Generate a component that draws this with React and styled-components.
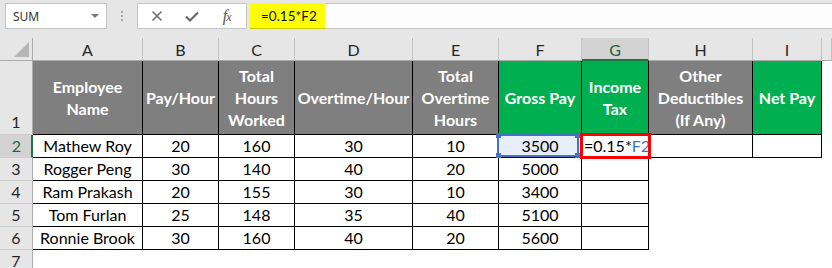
import React from 'react';
import styled, { createGlobalStyle, css } from 'styled-components';

const Global = createGlobalStyle`
  html, body { margin: 0; padding: 0; background: #fff; overflow: hidden; }
  body { font-family: Lato, "Liberation Sans", sans-serif; }
  * { box-sizing: border-box; }
`;

const Page = styled.div`
  width: 832px;
  height: 268px;
  overflow: hidden;
  background: #fff;
`;

const Toolbar = styled.div`
  height: 38px;
  background: #e6e6e6;
  display: flex;
  align-items: flex-start;
  padding-top: 3px;
`;

const NameBox = styled.div`
  margin-left: 5px;
  width: 102px;
  height: 26px;
  background: #fff;
  border: 1px solid #c6c6c6;
  display: flex;
  align-items: center;
  justify-content: space-between;
  padding: 0 7px 0 7px;
  font-family: "Noto Sans", "Open Sans", sans-serif;
  font-size: 12px;
  color: #333;
`;

const Caret = styled.span`
  width: 0;
  height: 0;
  border-left: 4px solid transparent;
  border-right: 4px solid transparent;
  border-top: 4px solid #7a7a7a;
`;

const Grip = styled.div`
  width: 30px;
  height: 26px;
  display: flex;
  flex-direction: column;
  align-items: center;
  justify-content: center;
  gap: 2px;
`;

const GripDot = styled.span`
  width: 2px;
  height: 2px;
  background: #a8a8a8;
`;

const ButtonBox = styled.div`
  width: 110px;
  height: 26px;
  background: #fff;
  border: 1px solid #c6c6c6;
  display: grid;
  grid-template-columns: repeat(3, 1fr);
  padding: 0 2px;
  align-items: center;
  justify-items: center;
  color: #6b6b6b;
`;

const Fx = styled.span`
  font-family: "Liberation Serif", serif;
  font-style: italic;
  font-size: 16px;
  color: #555;
  letter-spacing: -1px;
  & small { font-size: 12px; }
`;

const FormulaBox = styled.div`
  margin-left: 3px;
  flex: 1;
  height: 26px;
  background: #fdfdfd;
  border: 1px solid #c6c6c6;
  border-right: none;
  display: flex;
`;

const Highlight = styled.div`
  width: 75px;
  height: 26px;
  margin: -1px 0 -1px -1px;
  background: #ffff00;
  border-bottom: 1px solid #c9c900;
  padding-left: 11px;
  display: flex;
  align-items: center;
  font-size: 13.5px;
  color: #111;
`;

const Sheet = styled.div`
  display: grid;
  grid-template-columns: 33px 110px 76px 76px 118px 86px 83px 67px 104px 69px 10px;
  grid-template-rows: 23px 74px repeat(6, 23px);
  font-size: 16px;
`;

const Corner = styled.div`
  background: #e6e6e6;
  border-right: 1px solid #ababab;
  border-bottom: 1px solid #ababab;
  display: flex;
  justify-content: flex-end;
  align-items: flex-end;
  padding: 0 3px 3px 0;
`;

const Triangle = styled.span`
  width: 0;
  height: 0;
  border-left: 15px solid transparent;
  border-bottom: 15px solid #b5b5b5;
`;

const ColHead = styled.div`
  background: #e6e6e6;
  border-right: 1px solid #c2c2c2;
  border-bottom: 1px solid #ababab;
  display: flex;
  align-items: center;
  justify-content: center;
  color: #262626;
  padding-top: 1px;
  ${(p) =>
    p.$active &&
    css`
      background: #d3d3d3;
      border-bottom: 2px solid #217346;
      color: #1d5f3a;
    `}
`;

const RowHead = styled.div`
  background: #e6e6e6;
  border-right: 1px solid #ababab;
  border-bottom: 1px solid #cdcdcd;
  display: flex;
  justify-content: center;
  align-items: ${(p) => (p.$bottom ? 'flex-end' : 'center')};
  color: #262626;
  line-height: 22px;
  padding-bottom: ${(p) => (p.$bottom ? '1px' : '0')};
  ${(p) =>
    p.$active &&
    css`
      background: #d3d3d3;
      border-right: 2px solid #217346;
      color: #1d6b3f;
      padding-left: 2px;
    `}
`;

const kinds = {
  gray: css`
    background: #7f7f7f;
    color: #fff;
    font-weight: 700;
  `,
  green: css`
    background: #00b050;
    color: #fff;
    font-weight: 700;
  `,
  data: css`
    background: #fff;
    color: #000;
  `,
  blank: css`
    background: #fff;
  `,
};

const Cell = styled.div`
  position: relative;
  display: flex;
  align-items: center;
  justify-content: center;
  text-align: center;
  line-height: 23px;
  white-space: nowrap;
  ${(p) => kinds[p.$kind || 'blank']}
  ${(p) =>
    p.$boxed &&
    css`
      border-right: 1px solid #000;
      border-bottom: 1px solid #000;
      line-height: 22px;
    `}
`;

const SelectedCell = styled(Cell)`
  background: #e8eef9;
`;

const EditCell = styled(Cell)`
  justify-content: flex-start;
  padding-left: 2px;
`;

const Ref = styled.span`
  color: #3c72c8;
`;

const TextCursor = styled.span`
  display: inline-block;
  width: 1px;
  height: 19px;
  background: #000;
  margin-left: 2px;
`;

const RangeFrame = styled.span`
  position: absolute;
  top: -1px;
  left: -2px;
  right: 2px;
  bottom: 0;
  border: 2px solid #4472c4;
  z-index: 2;
  pointer-events: none;
`;

const Handle = styled.span`
  position: absolute;
  width: 5px;
  height: 5px;
  background: #4472c4;
  ${(p) => (p.$top ? 'top: -3px;' : 'bottom: -3px;')}
  ${(p) => (p.$left ? 'left: -3px;' : 'right: -3px;')}
`;

const RedFrame = styled.span`
  position: absolute;
  top: -2px;
  left: -2px;
  right: -3px;
  bottom: -2px;
  border: 3px solid #ff0000;
  z-index: 3;
  pointer-events: none;
`;

const columns = ['A', 'B', 'C', 'D', 'E', 'F', 'G', 'H', 'I', ''];

const headers = [
  { k: 'gray', t: ['Employee', 'Name'] },
  { k: 'gray', t: ['Pay/Hour'] },
  { k: 'gray', t: ['Total', 'Hours', 'Worked'] },
  { k: 'gray', t: ['Overtime/Hour'] },
  { k: 'gray', t: ['Total', 'Overtime', 'Hours'] },
  { k: 'green', t: ['Gross Pay'] },
  { k: 'green', t: ['Income', 'Tax'] },
  { k: 'gray', t: ['Other', 'Deductibles', '(If Any)'] },
  { k: 'green', t: ['Net Pay'] },
];

const rows = [
  ['Mathew Roy', 20, 160, 30, 10, 3500],
  ['Rogger Peng', 30, 140, 40, 20, 5000],
  ['Ram Prakash', 20, 155, 30, 10, 3400],
  ['Tom Furlan', 25, 148, 35, 40, 5100],
  ['Ronnie Brook', 30, 160, 40, 20, 5600],
];

const CloseIcon = () => (
  <svg width="12" height="12" viewBox="0 0 12 12">
    <path d="M1.5 1.5 L10.5 10.5 M10.5 1.5 L1.5 10.5" stroke="#6b6b6b" strokeWidth="1.5" fill="none" />
  </svg>
);

const CheckIcon = () => (
  <svg width="14" height="11" viewBox="0 0 14 11">
    <path d="M1 5.5 L5 9.5 L13 1.5" stroke="#6b6b6b" strokeWidth="2.2" fill="none" />
  </svg>
);

export default function App() {
  return (
    <Page>
      <Global />
      <Toolbar>
        <NameBox>
          <span>SUM</span>
          <Caret />
        </NameBox>
        <Grip>
          <GripDot />
          <GripDot />
          <GripDot />
        </Grip>
        <ButtonBox>
          <CloseIcon />
          <CheckIcon />
          <Fx>
            f<small>x</small>
          </Fx>
        </ButtonBox>
        <FormulaBox>
          <Highlight>=0.15*F2</Highlight>
        </FormulaBox>
      </Toolbar>
      <Sheet>
        <Corner>
          <Triangle />
        </Corner>
        {columns.map((c, i) => (
          <ColHead key={i} $active={c === 'G'}>
            {c}
          </ColHead>
        ))}

        <RowHead $bottom>1</RowHead>
        {headers.map((h, i) => (
          <Cell key={i} $kind={h.k} $boxed>
            <div>
              {h.t.map((line, j) => (
                <div key={j}>{line}</div>
              ))}
            </div>
          </Cell>
        ))}
        <Cell />

        {rows.map((r, ri) => {
          const n = ri + 2;
          const first = ri === 0;
          return (
            <React.Fragment key={ri}>
              <RowHead $active={first}>{n}</RowHead>
              {r.slice(0, 5).map((v, ci) => (
                <Cell key={ci} $kind="data" $boxed>
                  {v}
                </Cell>
              ))}
              {first ? (
                <SelectedCell $kind="data" $boxed>
                  {r[5]}
                  <RangeFrame>
                    <Handle $top $left />
                    <Handle $top />
                    <Handle $left />
                    <Handle />
                  </RangeFrame>
                </SelectedCell>
              ) : (
                <Cell $kind="data" $boxed>
                  {r[5]}
                </Cell>
              )}
              {first ? (
                <EditCell $kind="data" $boxed>
                  =0.15*<Ref>F2</Ref>
                  <TextCursor />
                  <RedFrame />
                </EditCell>
              ) : (
                <Cell $kind="data" $boxed />
              )}
              <Cell $boxed={first} />
              <Cell $boxed={first} />
              <Cell />
            </React.Fragment>
          );
        })}

        <RowHead>7</RowHead>
        {columns.map((c, i) => (
          <Cell key={i} />
        ))}
      </Sheet>
    </Page>
  );
}
